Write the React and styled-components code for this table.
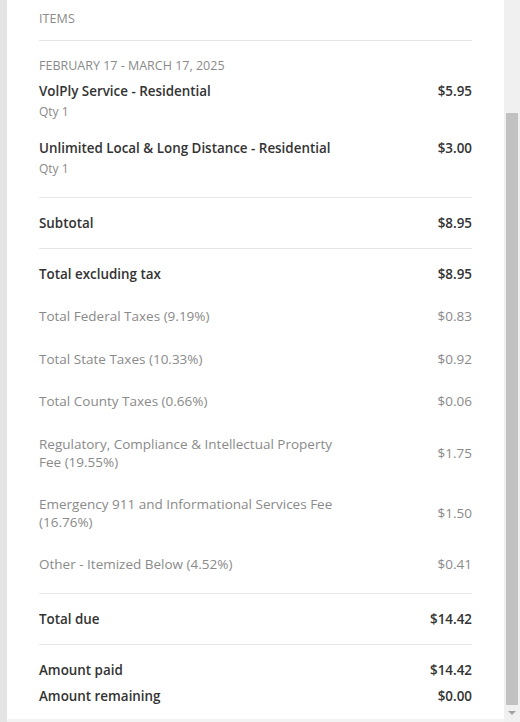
import React from 'react';
import styled, { createGlobalStyle } from 'styled-components';

const GlobalStyle = createGlobalStyle`
  html, body {
    margin: 0;
    padding: 0;
    height: 100%;
    overflow: hidden;
    background: #ffffff;
  }
  #root {
    height: 100%;
  }
  * {
    box-sizing: border-box;
  }
`;

const Frame = styled.div`
  display: flex;
  height: 722px;
  width: 520px;
  font-family: 'Open Sans', 'Noto Sans', sans-serif;
  color: #333333;
`;

const Gutter = styled.div`
  width: 7px;
  flex: none;
  background: #e4e4e4;
`;

const Card = styled.main`
  flex: 1;
  background: #ffffff;
  padding: 0 32px;
  border-bottom: 3px solid #f3f3f3;
  overflow: hidden;
`;

const Scrollbar = styled.div`
  width: 16px;
  flex: none;
  background: #f0f0f0;
  display: flex;
  flex-direction: column;
  align-items: center;
  padding-top: 113px;
`;

const Thumb = styled.div`
  width: 12px;
  height: 592px;
  background: #c1c1c1;
`;

const Arrow = styled.div`
  margin-top: 6px;
  width: 0;
  height: 0;
  border-left: 4px solid transparent;
  border-right: 4px solid transparent;
  border-top: 4px solid #a3a3a3;
`;

const Header = styled.div`
  padding: 10px 0 12px;
  font-size: 12.5px;
  line-height: 18px;
  letter-spacing: 0.1px;
  color: #8a8a8a;
  border-bottom: 1px solid #e6e6e6;
`;

const Section = styled.section`
  display: flex;
  flex-direction: column;
  gap: ${p => p.gap || 0}px;
  padding: ${p => p.pad || '16px 0'};
  border-bottom: ${p => (p.last ? 'none' : '1px solid #e6e6e6')};
`;

const Period = styled.div`
  font-size: 12.5px;
  line-height: 18px;
  color: #8a8a8a;
  margin-bottom: 6px;
`;

const Item = styled.div`
  display: flex;
  justify-content: space-between;
  align-items: flex-start;
  & + & {
    margin-top: 18px;
  }
`;

const ItemName = styled.div`
  font-size: 13.4px;
  font-weight: 600;
  line-height: 20px;
`;

const Qty = styled.div`
  font-size: 12px;
  line-height: 16px;
  color: #8a8a8a;
  margin-top: 3px;
`;

const Row = styled.div`
  display: flex;
  justify-content: space-between;
  align-items: center;
  gap: 40px;
  font-size: ${p => (p.muted ? '13.5px' : '13.4px')};
  line-height: 18px;
  font-weight: ${p => (p.muted ? 400 : 600)};
  color: ${p => (p.muted ? '#8a8a8a' : '#333333')};
`;

const Label = styled.span`
  max-width: 310px;
`;

const Amount = styled.span`
  text-align: right;
  white-space: nowrap;
`;

const items = [
  { name: 'VolPly Service - Residential', qty: 1, amount: '$5.95' },
  { name: 'Unlimited Local & Long Distance - Residential', qty: 1, amount: '$3.00' },
];

const taxes = [
  { label: 'Total Federal Taxes (9.19%)', amount: '$0.83' },
  { label: 'Total State Taxes (10.33%)', amount: '$0.92' },
  { label: 'Total County Taxes (0.66%)', amount: '$0.06' },
  { label: 'Regulatory, Compliance & Intellectual Property Fee (19.55%)', amount: '$1.75' },
  { label: 'Emergency 911 and Informational Services Fee (16.76%)', amount: '$1.50' },
  { label: 'Other - Itemized Below (4.52%)', amount: '$0.41' },
];

export default function App() {
  return (
    <>
      <GlobalStyle />
      <Frame>
        <Gutter />
        <Card>
          <Header>ITEMS</Header>
          <Section pad="16px 0 20px">
            <Period>FEBRUARY 17 - MARCH 17, 2025</Period>
            {items.map(item => (
              <Item key={item.name}>
                <div>
                  <ItemName>{item.name}</ItemName>
                  <Qty>Qty {item.qty}</Qty>
                </div>
                <ItemName as="span">{item.amount}</ItemName>
              </Item>
            ))}
          </Section>
          <Section>
            <Row>
              <span>Subtotal</span>
              <Amount>$8.95</Amount>
            </Row>
          </Section>
          <Section pad="16px 0 20px" gap={24.4}>
            <Row>
              <span>Total excluding tax</span>
              <Amount>$8.95</Amount>
            </Row>
            {taxes.map(t => (
              <Row muted key={t.label}>
                <Label>{t.label}</Label>
                <Amount>{t.amount}</Amount>
              </Row>
            ))}
          </Section>
          <Section>
            <Row>
              <span>Total due</span>
              <Amount>$14.42</Amount>
            </Row>
          </Section>
          <Section gap={8} last>
            <Row>
              <span>Amount paid</span>
              <Amount>$14.42</Amount>
            </Row>
            <Row>
              <span>Amount remaining</span>
              <Amount>$0.00</Amount>
            </Row>
          </Section>
        </Card>
        <Scrollbar>
          <Thumb />
          <Arrow />
        </Scrollbar>
      </Frame>
    </>
  );
}
